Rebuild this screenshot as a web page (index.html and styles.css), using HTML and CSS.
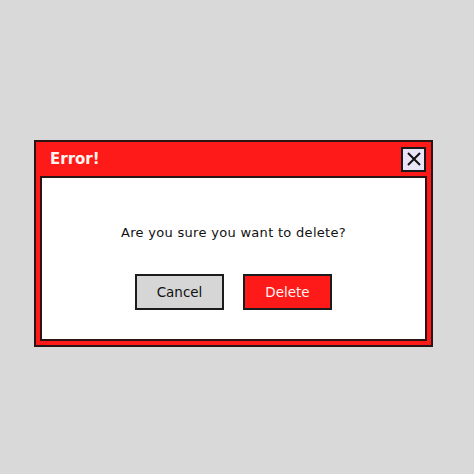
FILE: index.html
```html
<!DOCTYPE html>
<html lang="en">
<head>
    <meta charset="UTF-8">
    <meta name="viewport" content="width=device-width, initial-scale=1.0">
    <title>Error!</title>
    <link rel="stylesheet" href="styles.css">
</head>
<body>
    <div class="dialog">
        <div class="titlebar">
            <span class="title">Error!</span>
            <button class="closeBtn" aria-label="Close">
                <svg width="16" height="16" viewBox="0 0 16 16">
                    <path d="M2 2 L14 14 M14 2 L2 14" stroke="#111" stroke-width="2" fill="none"/>
                </svg>
            </button>
        </div>
        <div class="panel">
            <p class="message">Are you sure you want to delete?</p>
            <div class="actions">
                <button class="btn cancelBtn">Cancel</button>
                <button class="btn deleteBtn">Delete</button>
            </div>
        </div>
    </div>
</body>
</html>
```

FILE: styles.css
```css
html, body {
    margin: 0;
    padding: 0;
    width: 100%;
    height: 100%;
    background: #d9d9d9;
    font-family: "DejaVu Sans", sans-serif;
}

body {
    box-sizing: border-box;
    padding: 140px 0 0 34px;
}

.dialog {
    width: 399px;
    box-sizing: border-box;
    background: #ff1a1a;
    border: 2px solid #2a1414;
    padding: 0 4px 4px 4px;
}

.titlebar {
    height: 34px;
    display: flex;
    align-items: center;
    justify-content: space-between;
    padding: 0 1px 0 10px;
}

.title {
    color: #fff4f0;
    font-weight: bold;
    font-size: 15px;
}

.closeBtn {
    width: 25px;
    height: 25px;
    padding: 0;
    background: #e8e6f6;
    border: 2px solid #1a1a1a;
    display: flex;
    align-items: center;
    justify-content: center;
    cursor: pointer;
}

.panel {
    background: #fff;
    border: 2px solid #2a1414;
    height: 165px;
    box-sizing: border-box;
    display: flex;
    flex-direction: column;
    align-items: center;
    padding-top: 45px;
}

.message {
    margin: 0;
    font-size: 13px;
    line-height: 20px;
    color: #111;
    letter-spacing: 0.3px;
}

.actions {
    display: flex;
    gap: 19px;
    margin-top: 31px;
}

.btn {
    width: 89px;
    height: 36px;
    border: 2px solid #1c1c1c;
    font-family: "DejaVu Sans", sans-serif;
    font-size: 13.5px;
    cursor: pointer;
}

.cancelBtn {
    background: #d6d6d6;
    color: #111;
}

.deleteBtn {
    background: #ff1a1a;
    color: #fff4f0;
}
```
